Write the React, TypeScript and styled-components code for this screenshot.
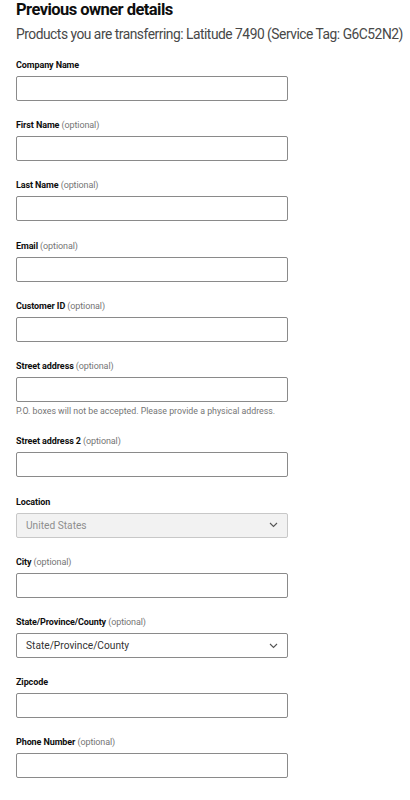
import React from 'react'
import styled, { createGlobalStyle } from 'styled-components'

const GlobalStyle = createGlobalStyle`
  html, body {
    margin: 0;
    padding: 0;
    background: #fff;
  }
  body {
    font-family: Roboto, "Liberation Sans", Arial, sans-serif;
    color: #0e0e0e;
  }
`

const Page = styled.div`
  padding: 0 16px;
  width: 410px;
  box-sizing: border-box;
`

const Title = styled.h2`
  margin: 0;
  font-size: 16.5px;
  line-height: 19px;
  font-weight: 700;
  letter-spacing: -0.55px;
  color: #0e0e0e;
`

const Subtitle = styled.p`
  margin: 7px 0 0;
  font-size: 13.8px;
  line-height: 17px;
  letter-spacing: -0.48px;
  color: #484848;
  white-space: nowrap;
`

const Form = styled.form`
  display: flex;
  flex-direction: column;
  margin-top: 16px;
`

const Field = styled.div<{ $helper?: boolean }>`
  display: flex;
  flex-direction: column;
  height: ${p => (p.$helper ? 75.5 : 60.2)}px;
`

const Label = styled.label`
  font-size: 9px;
  line-height: 12px;
  font-weight: 700;
  letter-spacing: -0.1px;
  color: #0e0e0e;
`

const Optional = styled.span`
  font-weight: 400;
  color: #757575;
`

const TextBox = styled.input`
  box-sizing: border-box;
  margin-top: 5px;
  width: 272px;
  height: 25px;
  border: 1px solid #8a8a8a;
  border-radius: 2px;
  background: #fff;
  outline: none;
`

const SelectBox = styled.div<{ $disabled?: boolean }>`
  box-sizing: border-box;
  margin-top: 5px;
  width: 272px;
  height: 25px;
  border: 1px solid ${p => (p.$disabled ? '#c8c8c8' : '#8a8a8a')};
  border-radius: 2px;
  background: ${p => (p.$disabled ? '#f2f2f2' : '#fff')};
  display: flex;
  align-items: center;
  justify-content: space-between;
  padding: 0 9px;
  font-size: 10.2px;
  color: ${p => (p.$disabled ? '#8e8e8e' : '#333')};
`

const Helper = styled.div`
  margin-top: 3px;
  font-size: 8.8px;
  line-height: 12px;
  color: #757575;
`

const Chevron = () => (
  <svg width="9" height="6" viewBox="0 0 9 6" fill="none">
    <path d="M1 1l3.5 3.5L8 1" stroke="#555" strokeWidth="1.1" />
  </svg>
)

type FieldDef = {
  label: string
  optional?: boolean
  kind?: 'text' | 'select'
  value?: string
  disabled?: boolean
  helper?: string
}

const fields: FieldDef[] = [
  { label: 'Company Name' },
  { label: 'First Name', optional: true },
  { label: 'Last Name', optional: true },
  { label: 'Email', optional: true },
  { label: 'Customer ID', optional: true },
  {
    label: 'Street address',
    optional: true,
    helper: 'P.O. boxes will not be accepted. Please provide a physical address.',
  },
  { label: 'Street address 2', optional: true },
  { label: 'Location', kind: 'select', value: 'United States', disabled: true },
  { label: 'City', optional: true },
  { label: 'State/Province/County', optional: true, kind: 'select', value: 'State/Province/County' },
  { label: 'Zipcode' },
  { label: 'Phone Number', optional: true },
]

export default function App() {
  return (
    <>
      <GlobalStyle />
      <Page>
        <Title>Previous owner details</Title>
        <Subtitle>Products you are transferring: Latitude 7490 (Service Tag: G6C52N2)</Subtitle>
        <Form>
          {fields.map(f => (
            <Field key={f.label} $helper={!!f.helper}>
              <Label>
                {f.label}
                {f.optional && <Optional> (optional)</Optional>}
              </Label>
              {f.kind === 'select' ? (
                <SelectBox $disabled={f.disabled}>
                  <span>{f.value}</span>
                  <Chevron />
                </SelectBox>
              ) : (
                <TextBox type="text" />
              )}
              {f.helper && <Helper>{f.helper}</Helper>}
            </Field>
          ))}
        </Form>
      </Page>
    </>
  )
}
